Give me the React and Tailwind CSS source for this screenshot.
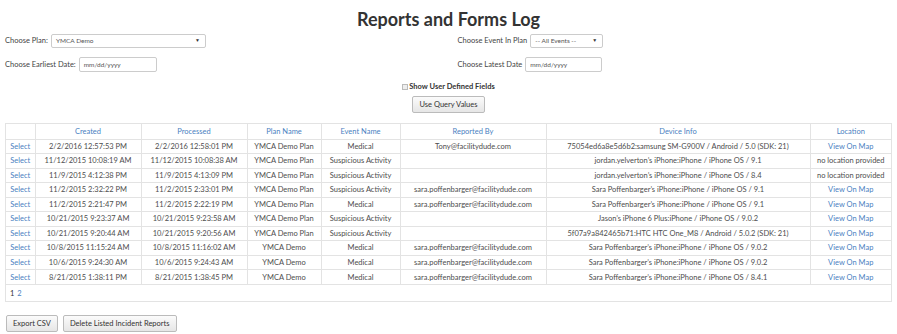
const ROWS = [
  ['2/2/2016 12:57:53 PM', '2/2/2016 12:58:01 PM', 'YMCA Demo Plan', 'Medical', 'Tony@facilitydude.com', '75054ed6a8e5d6b2:samsung SM-G900V / Android / 5.0 (SDK: 21)', true],
  ['11/12/2015 10:08:19 AM', '11/12/2015 10:08:38 AM', 'YMCA Demo Plan', 'Suspicious Activity', '', 'jordan.yelverton\u2019s iPhone:iPhone / iPhone OS / 9.1', false],
  ['11/9/2015 4:12:38 PM', '11/9/2015 4:13:09 PM', 'YMCA Demo Plan', 'Suspicious Activity', '', 'jordan.yelverton\u2019s iPhone:iPhone / iPhone OS / 8.4', false],
  ['11/2/2015 2:32:22 PM', '11/2/2015 2:33:01 PM', 'YMCA Demo Plan', 'Suspicious Activity', 'sara.poffenbarger@facilitydude.com', 'Sara Poffenbarger\u2019s iPhone:iPhone / iPhone OS / 9.1', true],
  ['11/2/2015 2:21:47 PM', '11/2/2015 2:22:19 PM', 'YMCA Demo Plan', 'Medical', 'sara.poffenbarger@facilitydude.com', 'Sara Poffenbarger\u2019s iPhone:iPhone / iPhone OS / 9.1', true],
  ['10/21/2015 9:23:37 AM', '10/21/2015 9:23:58 AM', 'YMCA Demo Plan', 'Suspicious Activity', '', 'Jason\u2019s iPhone 6 Plus:iPhone / iPhone OS / 9.0.2', true],
  ['10/21/2015 9:20:44 AM', '10/21/2015 9:20:56 AM', 'YMCA Demo Plan', 'Suspicious Activity', '', '5f07a9a842465b71:HTC HTC One_M8 / Android / 5.0.2 (SDK: 21)', true],
  ['10/8/2015 11:15:24 AM', '10/8/2015 11:16:02 AM', 'YMCA Demo', 'Medical', 'sara.poffenbarger@facilitydude.com', 'Sara Poffenbarger\u2019s iPhone:iPhone / iPhone OS / 9.0.2', true],
  ['10/6/2015 9:24:30 AM', '10/6/2015 9:24:43 AM', 'YMCA Demo', 'Medical', 'sara.poffenbarger@facilitydude.com', 'Sara Poffenbarger\u2019s iPhone:iPhone / iPhone OS / 9.0.2', true],
  ['8/21/2015 1:38:11 PM', '8/21/2015 1:38:45 PM', 'YMCA Demo', 'Medical', 'sara.poffenbarger@facilitydude.com', 'Sara Poffenbarger\u2019s iPhone:iPhone / iPhone OS / 8.4.1', true],
]

const HEADS = ['', 'Created', 'Processed', 'Plan Name', 'Event Name', 'Reported By', 'Device Info', 'Location']
const WIDTHS = ['w-[29px]', 'w-[106px]', 'w-[106px]', 'w-[74px]', 'w-[79px]', 'w-[146px]', 'w-[264px]', '']

function Select({ value, className }) {
  return (
    <div className={`h-[14px] flex items-center justify-between border border-[#ccc] rounded-[2px] bg-white pl-[4px] pr-[5px] text-[6.5px] text-[#555] ${className}`}>
      <span>{value}</span>
      <span className="text-[5px] text-[#333]">▼</span>
    </div>
  )
}

function DateInput({ className }) {
  return (
    <div className={`h-[15px] flex items-center border border-[#ccc] rounded-[2px] bg-white px-[4px] text-[6.5px] text-[#555] ${className}`}>
      mm/dd/yyyy
    </div>
  )
}

function Btn({ children, className = '' }) {
  return (
    <button type="button" className={`h-[17px] px-[6px] border border-[#bbb] rounded-[2px] bg-gradient-to-b from-[#fbfbfb] to-[#e6e6e6] text-[7.5px] text-[#333] leading-none ${className}`}>
      {children}
    </button>
  )
}

export default function App() {
  return (
    <div className="w-[897px] h-[334px] bg-white text-[#333] font-['Lato','Open_Sans',sans-serif] overflow-hidden">
      <h1 className="pt-[8px] text-center text-[18px] font-bold leading-[22px] text-[#333]">Reports and Forms Log</h1>

      <div className="grid grid-cols-2 mt-[4px] text-[7.5px] text-[#444]">
        <div className="pl-[5px]">
          <div className="flex items-center gap-[3px] h-[14px]">
            <span>Choose Plan:</span>
            <Select value="YMCA Demo" className="w-[155px]" />
          </div>
          <div className="flex items-center gap-[3px] mt-[9px] h-[15px]">
            <span>Choose Earliest Date:</span>
            <DateInput className="w-[78px]" />
          </div>
        </div>
        <div className="pl-[9px]">
          <div className="flex items-center gap-[3px] h-[14px]">
            <span>Choose Event In Plan</span>
            <Select value="-- All Events --" className="w-[73px]" />
          </div>
          <div className="flex items-center gap-[3px] mt-[9px] h-[15px]">
            <span>Choose Latest Date</span>
            <DateInput className="w-[77px]" />
          </div>
        </div>
      </div>

      <div className="flex justify-center items-center mt-[9px] text-[7.5px] font-bold text-[#333]">
        <span className="inline-block w-[6px] h-[6px] border border-[#bbb] bg-[#eee] mr-[1px]" />
        Show User Defined Fields
      </div>
      <div className="flex justify-center mt-[4px]">
        <Btn>Use Query Values</Btn>
      </div>

      <div className="mx-[5px] mt-[10px] border border-[#e3e3e3]">
        <table className="w-full border-collapse text-[7.5px] text-[#4d4d4d] text-center">
          <thead>
            <tr className="h-[15px]">
              {HEADS.map((h, i) => (
                <th key={i} className={`${WIDTHS[i]} border-l first:border-l-0 border-[#e3e3e3] font-normal text-[#4a7fc1] p-0`}>{h}</th>
              ))}
            </tr>
          </thead>
          <tbody>
            {ROWS.map((r, i) => (
              <tr key={i} className="h-[14.5px] border-t border-[#e3e3e3]">
                <td className="text-[#4a7fc1] p-0">Select</td>
                {r.slice(0, 6).map((c, j) => (
                  <td key={j} className="border-l border-[#e3e3e3] p-0 whitespace-nowrap">{c}</td>
                ))}
                <td className={`border-l border-[#e3e3e3] p-0 ${r[6] ? 'text-[#4a7fc1]' : ''}`}>{r[6] ? 'View On Map' : 'no location provided'}</td>
              </tr>
            ))}
          </tbody>
        </table>
        <div className="border-t border-[#e3e3e3] h-[17px] flex items-center pl-[4px] gap-[3px] text-[7.5px]">
          <span className="text-[#333]">1</span>
          <span className="text-[#4a7fc1]">2</span>
        </div>
      </div>

      <div className="flex gap-[5px] ml-[6px] mt-[13px]">
        <Btn>Export CSV</Btn>
        <Btn>Delete Listed Incident Reports</Btn>
      </div>
    </div>
  )
}
